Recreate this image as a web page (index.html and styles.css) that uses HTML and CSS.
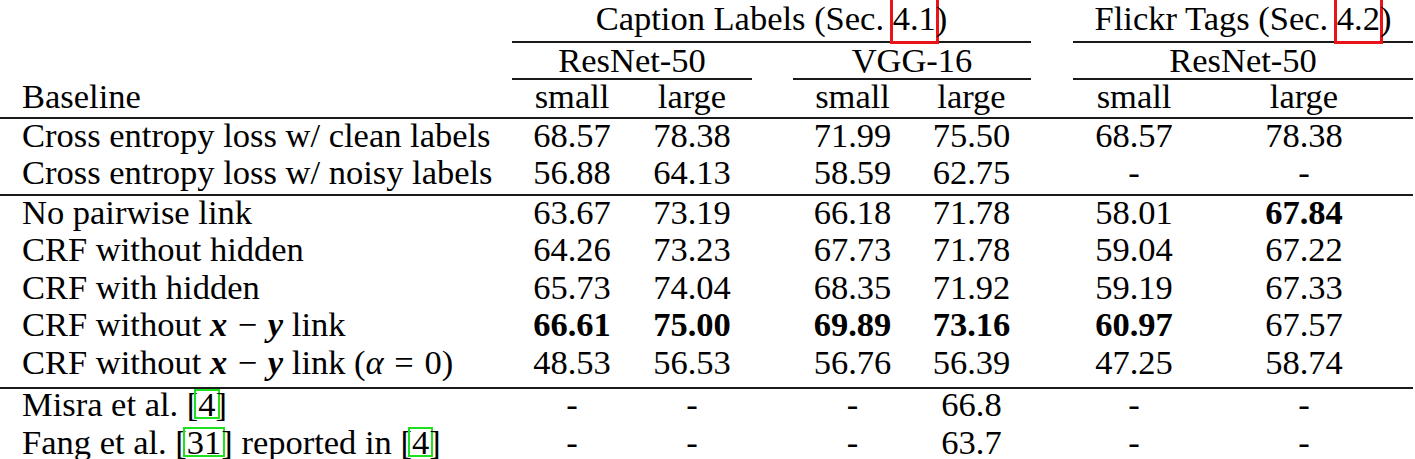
FILE: index.html
```html
<!DOCTYPE html>
<html lang="en">
<head>
<meta charset="utf-8">
<title>Results table</title>
<link rel="stylesheet" href="styles.css">
</head>
<body>
<table class="results">
  <colgroup>
    <col class="c-label"><col class="c-n1"><col class="c-n1"><col class="c-gap1"><col class="c-n2"><col class="c-n2"><col class="c-gap2"><col class="c-fs"><col class="c-fl">
  </colgroup>
  <thead>
    <tr class="h1">
      <th></th>
      <th colspan="5"><div class="group">Caption Labels (Sec. <span class="ref-red">4.1</span>)</div></th>
      <th></th>
      <th colspan="2"><div class="group">Flickr Tags (Sec. <span class="ref-red">4.2</span>)</div></th>
    </tr>
    <tr class="h2">
      <th></th>
      <th colspan="2"><div class="sub">ResNet-50</div></th>
      <th></th>
      <th colspan="2"><div class="sub">VGG-16</div></th>
      <th></th>
      <th colspan="2"><div class="sub">ResNet-50</div></th>
    </tr>
    <tr class="h3">
      <th class="label">Baseline</th><th>small</th><th>large</th><th></th><th>small</th><th>large</th><th></th><th>small</th><th>large</th>
    </tr>
  </thead>
  <tbody class="grp">
    <tr><td class="label">Cross entropy loss w/ clean labels</td><td>68.57</td><td>78.38</td><td></td><td>71.99</td><td>75.50</td><td></td><td>68.57</td><td>78.38</td></tr>
    <tr><td class="label">Cross entropy loss w/ noisy labels</td><td>56.88</td><td>64.13</td><td></td><td>58.59</td><td>62.75</td><td></td><td>-</td><td>-</td></tr>
  </tbody>
  <tbody class="grp">
    <tr><td class="label">No pairwise link</td><td>63.67</td><td>73.19</td><td></td><td>66.18</td><td>71.78</td><td></td><td>58.01</td><td><b>67.84</b></td></tr>
    <tr><td class="label">CRF without hidden</td><td>64.26</td><td>73.23</td><td></td><td>67.73</td><td>71.78</td><td></td><td>59.04</td><td>67.22</td></tr>
    <tr><td class="label">CRF with hidden</td><td>65.73</td><td>74.04</td><td></td><td>68.35</td><td>71.92</td><td></td><td>59.19</td><td>67.33</td></tr>
    <tr><td class="label">CRF without <i class="bm">x</i> <span class="op">&minus;</span> <i class="bm">y</i> link</td><td><b>66.61</b></td><td><b>75.00</b></td><td></td><td><b>69.89</b></td><td><b>73.16</b></td><td></td><td><b>60.97</b></td><td>67.57</td></tr>
    <tr class="last"><td class="label">CRF without <i class="bm">x</i> <span class="op">&minus;</span> <i class="bm">y</i> link (<i class="mi">&alpha;</i> <span class="op">=</span> 0)</td><td>48.53</td><td>56.53</td><td></td><td>56.76</td><td>56.39</td><td></td><td>47.25</td><td>58.74</td></tr>
  </tbody>
  <tbody class="grp">
    <tr><td class="label">Misra et al. [<span class="ref-green">4</span>]</td><td>-</td><td>-</td><td></td><td>-</td><td>66.8</td><td></td><td>-</td><td>-</td></tr>
    <tr><td class="label">Fang et al. [<span class="ref-green">31</span>] reported in [<span class="ref-green">4</span>]</td><td>-</td><td>-</td><td></td><td>-</td><td>63.7</td><td></td><td>-</td><td>-</td></tr>
  </tbody>
</table>
</body>
</html>
```

FILE: styles.css
```css
html, body {
  margin: 0;
  padding: 0;
  background: #ffffff;
}

body {
  font-family: "Liberation Serif", "Times New Roman", serif;
  font-size: 34.5px;
  color: #000000;
}

.results {
  border-collapse: collapse;
  border-spacing: 0;
  table-layout: fixed;
  width: 1413px;
}

.c-label { width: 512px; }
.c-n1 { width: 120px; }
.c-gap1 { width: 41px; }
.c-n2 { width: 119px; }
.c-gap2 { width: 42px; }
.c-fs { width: 122px; }
.c-fl { width: 218px; }

.results th,
.results td {
  padding: 0 0 6px 0;
  font-weight: normal;
  text-align: center;
  white-space: nowrap;
  height: 31.5px;
  line-height: 30px;
  vertical-align: middle;
}

.results .label {
  text-align: left;
  padding-left: 22px;
}

.results b {
  font-weight: bold;
}

.results .h1 th {
  height: 43px;
  padding: 0;
  vertical-align: top;
}

.group {
  border-bottom: 2px solid #1a1a1a;
  line-height: 36px;
  height: 41px;
}

.results .h2 th {
  height: 37px;
  padding: 0;
  vertical-align: top;
}

.sub {
  border-bottom: 2px solid #1a1a1a;
  line-height: 34px;
  height: 35px;
}

.results .h3 th {
  height: 31px;
  padding-bottom: 6px;
  border-bottom: 2px solid #1a1a1a;
}

.results .last td {
  height: 31.5px;
  padding-bottom: 9px;
}

.grp + .grp tr:first-child td {
  border-top: 2px solid #1a1a1a;
}

.bm {
  font-weight: bold;
  font-style: italic;
}

.mi {
  font-style: italic;
}

.op {
  padding: 0 2px;
}

.ref-red {
  display: inline-block;
  line-height: 36px;
  padding: 2px 0 5px;
  margin: -2px 0 -5px;
  outline: 3px solid #e8141a;
}

.ref-green {
  display: inline-block;
  line-height: 26px;
  padding: 0 2px;
  margin: 0 -2px;
  outline: 2px solid #1fe01f;
}
```
